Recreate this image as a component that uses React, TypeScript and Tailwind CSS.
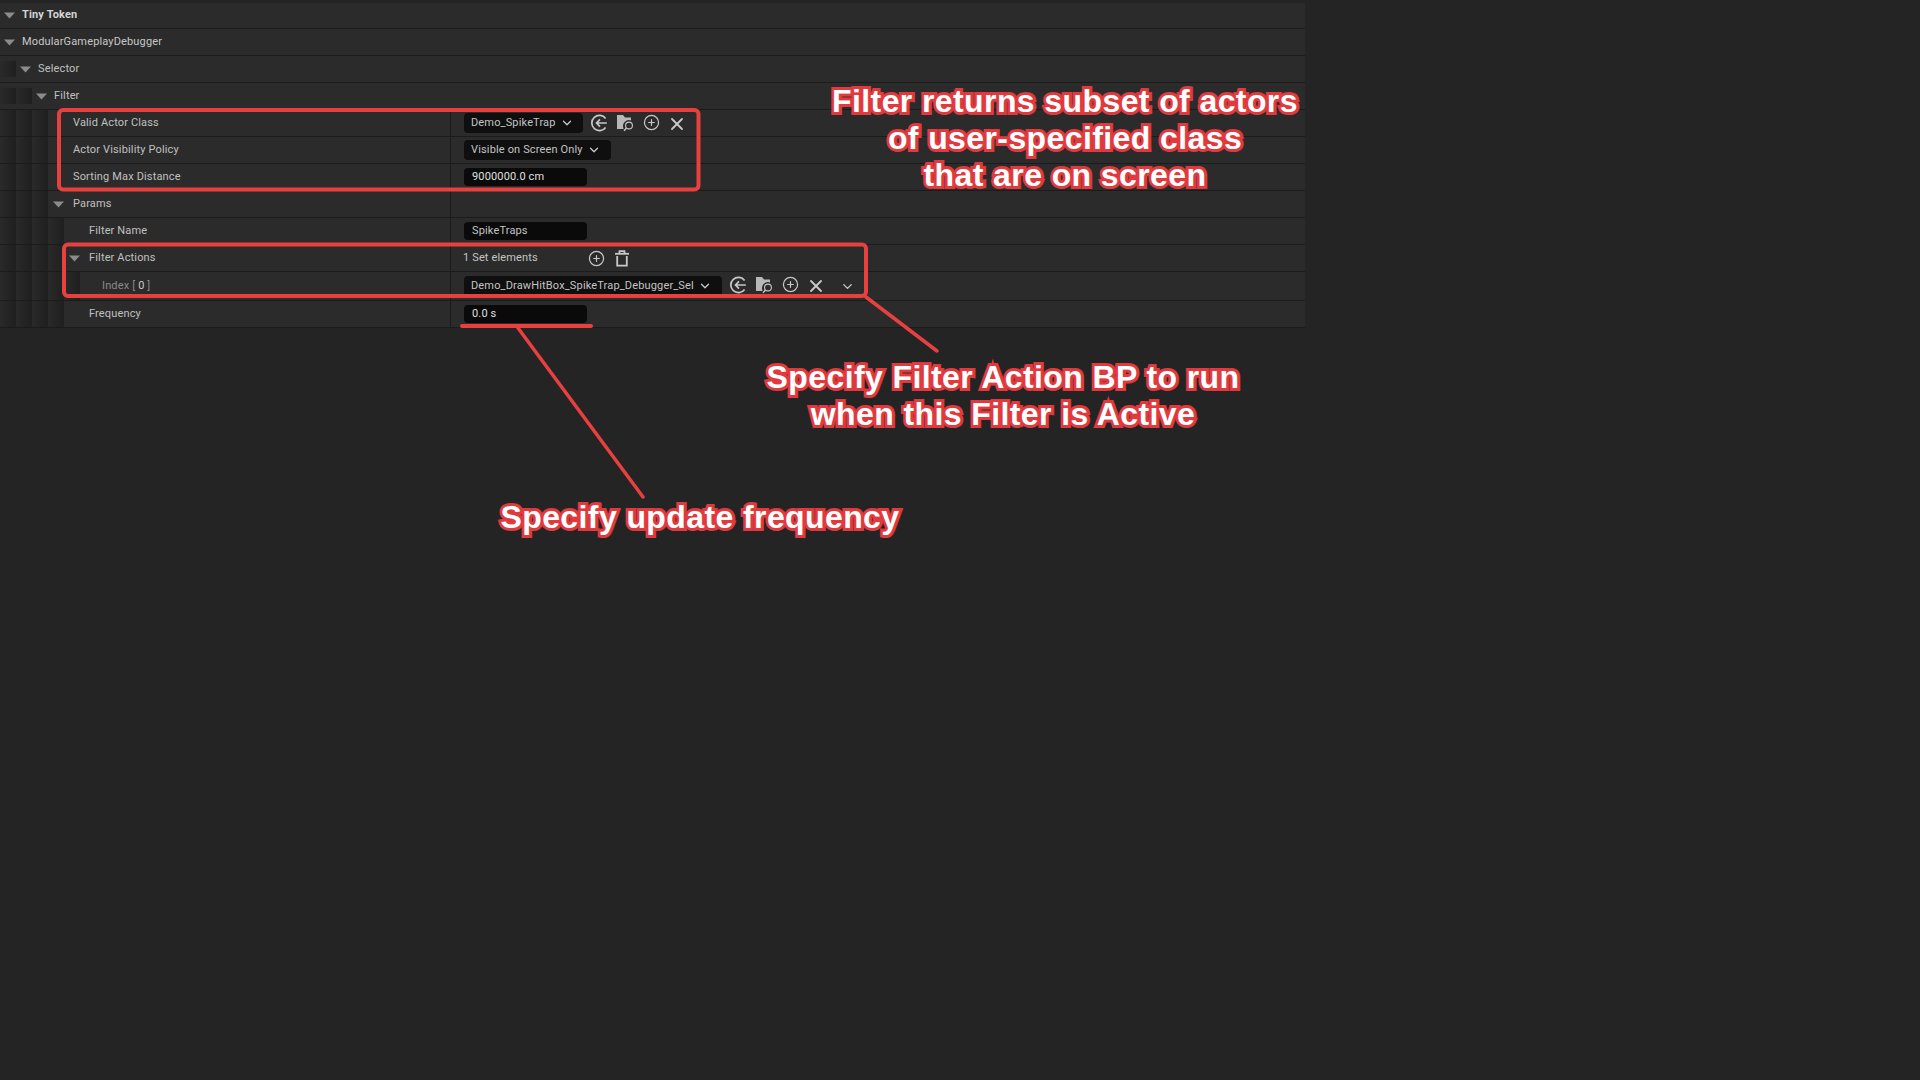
import { ChevronDown, CirclePlus, X } from "lucide-react";
import type { ReactNode } from "react";

type RowProps = {
  depth: number;
  label: ReactNode;
  arrow?: boolean;
  inset?: boolean;
  divider?: boolean;
  height?: string;
  labelClass?: string;
  children?: ReactNode;
};

function Arrow() {
  return (
    <svg width="11" height="7" viewBox="0 0 11 7" className="shrink-0">
      <path d="M0 0.5H11L5.5 6.5Z" fill="#8c8c8c" />
    </svg>
  );
}

function BrowseIcon() {
  return (
    <svg width="18" height="18" viewBox="0 0 18 18" fill="none" stroke="#c8c8c8" strokeWidth="1.7">
      <path d="M15.6 4.6A7.6 7.6 0 1 0 15.6 13.4" />
      <path d="M16.8 9H6.5M10 5.4L6.5 9L10 12.6" />
    </svg>
  );
}

function FolderSearchIcon() {
  return (
    <svg width="18" height="18" viewBox="0 0 18 18" fill="none">
      <path d="M1 1H7L9 3.5H15V6.5A6 6 0 0 0 7.5 14.5V15H1Z" fill="#b8b8b8" />
      <circle cx="13" cy="11.5" r="3.4" stroke="#c8c8c8" strokeWidth="1.1" />
      <path d="M10.5 14L8 16.8" stroke="#c8c8c8" strokeWidth="1.4" />
    </svg>
  );
}

function TrashIcon() {
  return (
    <svg width="16" height="17" viewBox="0 0 16 17" fill="none" stroke="#c8c8c8" strokeWidth="1.8">
      <path d="M5.5 3V1.2H10.5V3" />
      <path d="M1 3.8H15" />
      <path d="M3.2 6V15.6H12.8V6" />
    </svg>
  );
}

function ActionIcons() {
  return (
    <>
      <span className="w-[26px] flex justify-center"><BrowseIcon /></span>
      <span className="w-[26px] flex justify-center"><FolderSearchIcon /></span>
      <span className="w-[26px] flex justify-center"><CirclePlus size={17} color="#c8c8c8" strokeWidth={1.7} /></span>
      <span className="w-[26px] flex justify-center"><X size={20} color="#c8c8c8" strokeWidth={2.2} /></span>
    </>
  );
}

function Combo({ text, width, clip }: { text: string; width: string; clip?: boolean }) {
  return (
    <div className={`${width} h-[20px] bg-[#0f0f0f] rounded-[4px] flex items-center pl-[7px] pr-[10px] shrink-0`}>
      <span className={clip ? "flex-1 overflow-hidden whitespace-nowrap" : "flex-1 whitespace-nowrap"}>{text}</span>
      <ChevronDown size={14} color="#c8c8c8" strokeWidth={2.2} className="ml-[4px] shrink-0" />
    </div>
  );
}

function NumberBox({ text, color = "text-[#e0e0e0]" }: { text: string; color?: string }) {
  return (
    <div className={`w-[123px] h-[18px] bg-[#0a0a0a] rounded-[4px] flex items-center pl-[8px] ${color}`}>
      {text}
    </div>
  );
}

function Row({ depth, label, arrow, inset, divider = true, height = "h-[27px]", labelClass = "text-[#c0c0c0]", children }: RowProps) {
  const strips = Array.from({ length: depth });
  const pad = depth >= 3 ? "w-[25px]" : "w-[22px]";
  return (
    <div className={`${height} flex border-b border-[#1b1b1b] bg-[#2b2b2b]`}>
      <div className="w-[450px] flex shrink-0 items-stretch">
        {strips.map((_, i) => (
          <div key={i} className={`w-[16px] bg-gradient-to-r from-[#2a2a2a] to-[#1f1f1f] ${inset ? "my-[5px]" : ""}`} />
        ))}
        <div className={`${pad} relative flex items-center shrink-0`}>
          {arrow && (
            <span className={`absolute flex ${depth >= 3 ? "left-[5px]" : "left-[4px]"}`}>
              <Arrow />
            </span>
          )}
        </div>
        <div className={`flex items-center whitespace-nowrap ${labelClass}`}>{label}</div>
      </div>
      <div className={`flex-1 flex items-center pl-[13px] text-[#c4c4c4] border-l ${divider ? "border-[#1b1b1b]" : "border-transparent"}`}>
        {children}
      </div>
    </div>
  );
}

const noteClass =
  "absolute text-white font-bold text-center whitespace-nowrap text-[32px] leading-[37px] tracking-[0.4px] [font-family:'Liberation_Sans',Arial,sans-serif] [paint-order:stroke_fill] [-webkit-text-stroke:6px_#e0393e]";

export default function App() {
  return (
    <div className="relative w-[1920px] h-[1080px] overflow-hidden bg-[#242424] text-[11px] tracking-[0.15px] font-['Roboto',sans-serif]">
      <div className="w-[1305px] pt-[3px]">
        <Row depth={0} label="Tiny Token" arrow divider={false} height="h-[26px]" labelClass="text-[#d4d4d4] font-bold" />
        <Row depth={0} label="ModularGameplayDebugger" arrow divider={false} labelClass="text-[#c8c8c8]" />
        <Row depth={1} label="Selector" arrow inset divider={false} />
        <Row depth={2} label="Filter" arrow inset divider={false} />
        <Row depth={3} label="Valid Actor Class">
          <Combo text="Demo_SpikeTrap" width="w-[119px]" />
          <div className="flex ml-[3px] mt-[1px]"><ActionIcons /></div>
        </Row>
        <Row depth={3} label="Actor Visibility Policy">
          <Combo text="Visible on Screen Only" width="w-[147px]" />
        </Row>
        <Row depth={3} label="Sorting Max Distance">
          <NumberBox text="9000000.0 cm" />
        </Row>
        <Row depth={3} label="Params" arrow />
        <Row depth={4} label="Filter Name">
          <NumberBox text="SpikeTraps" color="text-[#c4c4c4]" />
        </Row>
        <Row depth={4} label="Filter Actions" arrow>
          <span className="w-[120px] -ml-[1px]">1 Set elements</span>
          <span className="w-[26px] flex justify-center"><CirclePlus size={17} color="#c8c8c8" strokeWidth={1.7} /></span>
          <span className="w-[26px] flex justify-center"><TrashIcon /></span>
        </Row>
        <Row
          depth={5}
          label={<span>Index [ <span className="text-[#c8c8c8]">0</span> ]</span>}
          height="h-[29px]"
          labelClass="text-[#8a8a8a] -ml-[3px]"
        >
          <Combo text="Demo_DrawHitBox_SpikeTrap_Debugger_Selector" width="w-[258px]" clip />
          <div className="flex ml-[3px]"><ActionIcons /></div>
          <ChevronDown size={15} color="#c8c8c8" strokeWidth={2.2} className="ml-[11px]" />
        </Row>
        <Row depth={4} label="Frequency">
          <NumberBox text="0.0 s" />
        </Row>
      </div>

      {/* red markup drawn over the panel */}
      <svg width="1920" height="1080" className="absolute inset-0" fill="none" stroke="#e8403f" strokeWidth="4">
        <rect x="59" y="110" width="639.5" height="79.5" rx="4" />
        <rect x="64" y="244.5" width="802" height="51.5" rx="4" />
        <path d="M462 326H591" strokeLinecap="round" />
        <path d="M866 297L937 351" strokeWidth="3.5" strokeLinecap="round" />
        <path d="M518 328L643 497" strokeWidth="3.5" strokeLinecap="round" />
      </svg>

      <div className={`${noteClass} left-[832px] top-[83px] w-[466px]`}>
        Filter returns subset of actors
        <br />
        of user-specified class
        <br />
        that are on screen
      </div>
      <div className={`${noteClass} left-[753px] top-[359px] w-[500px]`}>
        Specify Filter Action BP to run
        <br />
        when this Filter is Active
      </div>
      <div className={`${noteClass} left-[450px] top-[499px] w-[500px]`}>Specify update frequency</div>
    </div>
  );
}
